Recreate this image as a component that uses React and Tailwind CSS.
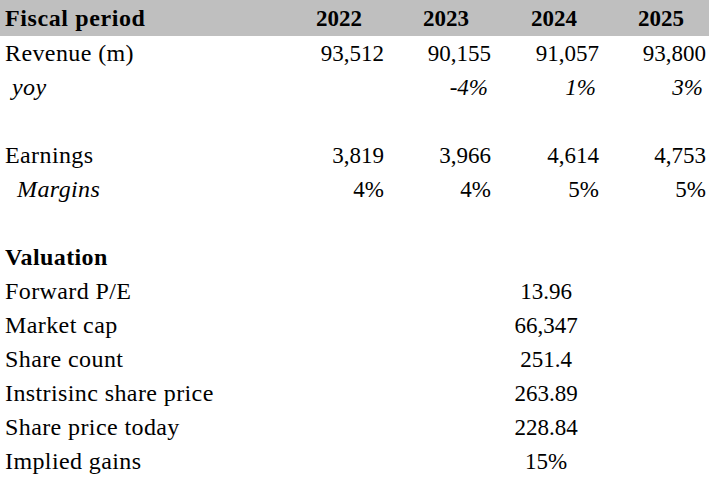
const years = ["2022", "2023", "2024", "2025"];

const rows = [
  { label: "Revenue (m)", values: ["93,512", "90,155", "91,057", "93,800"] },
  { label: "yoy", values: ["", "-4%", "1%", "3%"], italic: true, indent: "pl-[12px]" },
  { label: "", values: ["", "", "", ""] },
  { label: "Earnings", values: ["3,819", "3,966", "4,614", "4,753"] },
  { label: "Margins", values: ["4%", "4%", "5%", "5%"], italicLabel: true, indent: "pl-[17px]" },
  { label: "", values: ["", "", "", ""] },
];

const valuation = [
  ["Forward P/E", "13.96"],
  ["Market cap", "66,347"],
  ["Share count", "251.4"],
  ["Instrisinc share price", "263.89"],
  ["Share price today", "228.84"],
  ["Implied gains", "15%"],
];

const App = () => {
  return (
    <div className="w-[709px] h-[485px] bg-white text-black font-['Liberation_Serif',serif] text-[23px] leading-none">
      <div className="grid grid-cols-[278px_107px_107px_108px_107px] h-[36px] bg-[#bfbfbf] font-bold items-center">
        <div className="pl-[5px] text-[24px] tracking-[0.6px]">Fiscal period</div>
        {years.map((y) => (
          <div key={y} className="text-right pr-[23px]">
            {y}
          </div>
        ))}
      </div>

      {rows.map((row, i) => (
        <div key={i} className="grid grid-cols-[278px_107px_107px_108px_107px] h-[34px] items-center">
          <div
            className={`${row.indent || "pl-[5px]"} text-[24px] tracking-[0.4px] ${
              row.italic || row.italicLabel ? "italic" : ""
            }`}
          >
            {row.label}
          </div>
          {row.values.map((v, j) => (
            <div key={j} className={`text-right ${row.italic ? "italic pr-[4px]" : "pr-[1px]"}`}>
              {v}
            </div>
          ))}
        </div>
      ))}

      <div className="h-[34px] flex items-center pl-[5px] font-bold text-[24px] tracking-[0.4px]">Valuation</div>
      {valuation.map(([label, value]) => (
        <div key={label} className="grid grid-cols-[385px_322px] h-[34px] items-center">
          <div className="pl-[5px] text-[24px] tracking-[0.4px]">{label}</div>
          <div className="text-center">{value}</div>
        </div>
      ))}
    </div>
  );
};

export default App;
